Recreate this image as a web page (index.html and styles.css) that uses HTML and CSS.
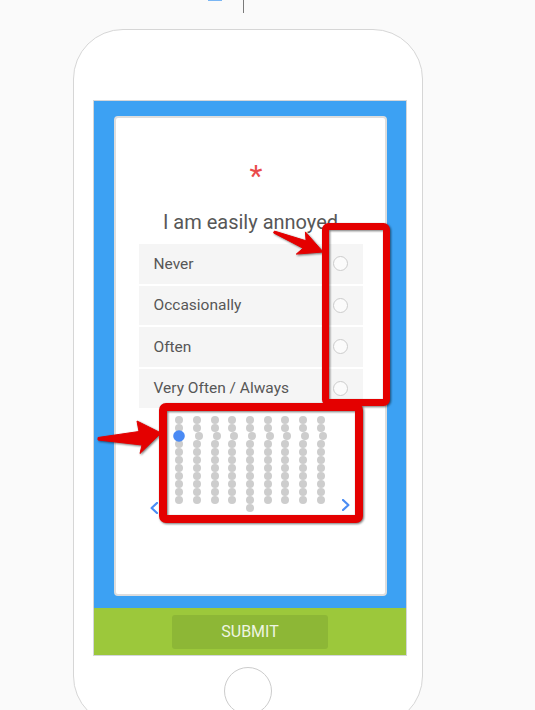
FILE: index.html
```html
<!DOCTYPE html>
<html>
<head>
<meta charset="utf-8">
<link rel="stylesheet" href="styles.css">
</head>
<body>
<div class="topbar"><span class="tb-blue"></span><span class="tb-gray"></span></div>
<div class="phone">
  <div class="screen">
    <div class="stage">
      <div class="card">
        <div class="required">*</div>
        <div class="question">I am easily annoyed</div>
        <div class="options">
          <div class="option"><span class="label">Never</span><span class="radio"></span></div>
          <div class="option"><span class="label">Occasionally</span><span class="radio"></span></div>
          <div class="option"><span class="label">Often</span><span class="radio"></span></div>
          <div class="option"><span class="label">Very Often / Always</span><span class="radio"></span></div>
        </div>
        <div class="carousel">
          <svg class="chev chev-left" viewBox="0 0 8 12" width="8" height="12"><polyline points="7,1 1.6,6 7,11"/></svg>
          <div class="dots">
            <div class="col"><i class="dot"></i><i class="dot"></i><i class="dot active"></i><i class="dot"></i><i class="dot"></i><i class="dot"></i><i class="dot"></i><i class="dot"></i><i class="dot"></i><i class="dot"></i><i class="dot"></i></div>
            <div class="col"><i class="dot"></i><i class="dot"></i><i class="dot shift"></i><i class="dot"></i><i class="dot"></i><i class="dot"></i><i class="dot"></i><i class="dot"></i><i class="dot"></i><i class="dot"></i><i class="dot"></i></div>
            <div class="col"><i class="dot"></i><i class="dot"></i><i class="dot shift"></i><i class="dot"></i><i class="dot"></i><i class="dot"></i><i class="dot"></i><i class="dot"></i><i class="dot"></i><i class="dot"></i><i class="dot"></i></div>
            <div class="col"><i class="dot"></i><i class="dot"></i><i class="dot shift"></i><i class="dot"></i><i class="dot"></i><i class="dot"></i><i class="dot"></i><i class="dot"></i><i class="dot"></i><i class="dot"></i><i class="dot"></i></div>
            <div class="col"><i class="dot"></i><i class="dot"></i><i class="dot shift"></i><i class="dot"></i><i class="dot"></i><i class="dot"></i><i class="dot"></i><i class="dot"></i><i class="dot"></i><i class="dot"></i><i class="dot"></i><i class="dot"></i></div>
            <div class="col"><i class="dot"></i><i class="dot"></i><i class="dot shift"></i><i class="dot"></i><i class="dot"></i><i class="dot"></i><i class="dot"></i><i class="dot"></i><i class="dot"></i><i class="dot"></i><i class="dot"></i></div>
            <div class="col"><i class="dot"></i><i class="dot"></i><i class="dot shift"></i><i class="dot"></i><i class="dot"></i><i class="dot"></i><i class="dot"></i><i class="dot"></i><i class="dot"></i><i class="dot"></i><i class="dot"></i></div>
            <div class="col"><i class="dot"></i><i class="dot"></i><i class="dot shift"></i><i class="dot"></i><i class="dot"></i><i class="dot"></i><i class="dot"></i><i class="dot"></i><i class="dot"></i><i class="dot"></i><i class="dot"></i></div>
            <div class="col"><i class="dot"></i><i class="dot"></i><i class="dot shift"></i><i class="dot"></i><i class="dot"></i><i class="dot"></i><i class="dot"></i><i class="dot"></i><i class="dot"></i><i class="dot"></i><i class="dot"></i></div>
          </div>
          <svg class="chev chev-right" viewBox="0 0 8 12" width="8" height="12"><polyline points="1,1 6.4,6 1,11"/></svg>
        </div>
      </div>
    </div>
    <div class="footer"><button class="submit">SUBMIT</button></div>
  </div>
  <div class="home"></div>
</div>
<svg class="annotations" width="535" height="710" viewBox="0 0 535 710">
  <g class="marks">
    <rect x="325.5" y="226.5" width="61" height="176" rx="3"/>
    <rect x="163" y="407" width="196" height="112" rx="3" class="wide"/>
    <polygon points="274.4,231.1 306.1,240.8 305.4,231.9 323.1,252 296.3,254.1 303,248.2 273.6,232.9"/>
    <polygon points="98,437.5 139,431.5 137,421 161,433 140,453.5 142,445 98,440"/>
  </g>
</svg>
</body>
</html>
```

FILE: styles.css
```css
html, body {
  margin: 0;
  padding: 0;
  overflow: hidden;
}
body {
  width: 535px;
  height: 710px;
  background: #fafafa;
  font-family: Roboto, "Liberation Sans", Arial, sans-serif;
  position: relative;
}
.topbar {
  height: 29px;
  display: flex;
  align-items: flex-start;
}
.tb-blue {
  display: block;
  margin-left: 208px;
  width: 14px;
  height: 1px;
  background: #7ab6f4;
}
.tb-gray {
  display: block;
  margin-left: 21px;
  width: 1px;
  height: 13px;
  background: #7a7a7a;
}
.phone {
  box-sizing: border-box;
  margin-left: 73px;
  width: 350px;
  height: 697px;
  border: 1px solid #d6d6d6;
  border-radius: 50px;
  background: #ffffff;
  padding-top: 70px;
}
.screen {
  box-sizing: border-box;
  margin-left: 19px;
  width: 314px;
  border: 1px solid #d3d6d9;
  display: flex;
  flex-direction: column;
}
.stage {
  box-sizing: border-box;
  height: 507px;
  background: #3ca1f3;
  padding: 15px 19px 12px 20px;
  display: flex;
  flex-direction: column;
}
.card {
  flex: 1;
  background: #ffffff;
  border: 2px solid #dddddd;
  border-radius: 4px;
  display: flex;
  flex-direction: column;
  align-items: center;
}
.required {
  margin-top: 43px;
  height: 30px;
  font-size: 30px;
  line-height: 30px;
  color: #ea4b4b;
  padding-left: 11px;
}
.question {
  margin-top: 19.5px;
  height: 22px;
  font-size: 20px;
  line-height: 22px;
  color: #575757;
}
.options {
  margin-top: 11.5px;
  width: 224px;
  display: flex;
  flex-direction: column;
  gap: 2px;
}
.option {
  box-sizing: border-box;
  height: 39.5px;
  background: #f5f5f5;
  display: flex;
  align-items: center;
  justify-content: space-between;
  padding: 0 14.5px 0 15px;
}
.label {
  font-size: 15.5px;
  color: #575757;
}
.radio {
  box-sizing: border-box;
  width: 15px;
  height: 15px;
  border: 1.6px solid #cccccc;
  border-radius: 50%;
  background: #fbfbfb;
}
.carousel {
  margin-top: 8px;
  width: 202px;
  display: flex;
  align-items: flex-start;
}
.chev {
  fill: none;
  stroke: #4a8cf3;
  stroke-width: 2.2;
  stroke-linecap: round;
  stroke-linejoin: round;
}
.chev-left {
  margin-top: 86px;
  margin-right: 17.8px;
}
.chev-right {
  margin-top: 83px;
  margin-left: 17px;
}
.dots {
  display: flex;
  gap: 9.7px;
}
.col {
  display: flex;
  flex-direction: column;
}
.dot {
  display: block;
  width: 8px;
  height: 8px;
  border-radius: 50%;
  background: #cdcdcd;
}
.dot.shift {
  transform: translateX(2px);
}
.dot.active {
  background: #4a8af4;
  transform: scale(1.45);
}
.footer {
  height: 47px;
  background: #9cc83b;
  display: flex;
  align-items: center;
  justify-content: center;
}
.submit {
  width: 156px;
  height: 34px;
  border: none;
  border-radius: 3px;
  background: #8db736;
  color: #eef5e2;
  font-family: Roboto, "Liberation Sans", Arial, sans-serif;
  font-size: 16px;
  padding: 0;
}
.home {
  box-sizing: border-box;
  margin-top: 11px;
  margin-left: 150px;
  width: 48px;
  height: 48px;
  border: 1px solid #cccccc;
  border-radius: 50%;
}
.annotations {
  position: absolute;
  left: 0;
  top: 0;
  pointer-events: none;
}
.marks {
  filter: drop-shadow(1px 1px 1px rgba(0, 0, 0, 0.55));
}
.marks rect {
  fill: none;
  stroke: #e40000;
  stroke-width: 7;
}
.marks rect.wide {
  stroke-width: 8;
}
.marks polygon {
  fill: #e40000;
  stroke: #e40000;
  stroke-width: 1;
  stroke-linejoin: round;
}
```
